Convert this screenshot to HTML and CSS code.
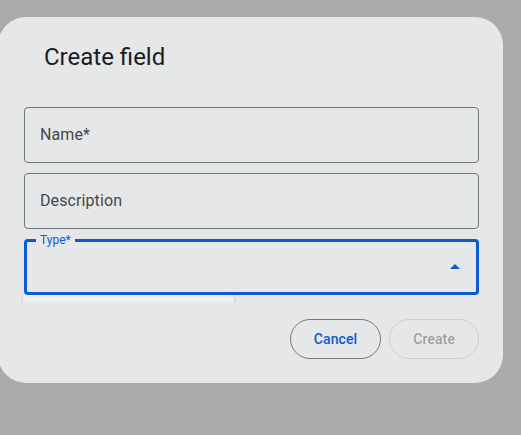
FILE: index.html
```html
<!DOCTYPE html>
<html>
<head>
<meta charset="utf-8">
<link rel="stylesheet" href="styles.css">
</head>
<body>
<div class="dialog">
  <h1 class="title">Create field</h1>
  <div class="fields">
    <div class="field"><span class="placeholder">Name*</span></div>
    <div class="field"><span class="placeholder">Description</span></div>
    <div class="field field-focused">
      <span class="floating-label">Type*</span>
      <span class="arrow"></span>
      <div class="menu-clip"><div class="menu"></div></div>
    </div>
  </div>
  <div class="actions">
    <button class="btn btn-cancel">Cancel</button>
    <button class="btn btn-disabled">Create</button>
  </div>
</div>
</body>
</html>
```

FILE: styles.css
```css
html, body {
  margin: 0;
  padding: 0;
  background: #aaabaa;
  font-family: Roboto, "Liberation Sans", sans-serif;
  overflow: hidden;
}
body {
  height: 435px;
  padding-top: 17px;
  box-sizing: border-box;
}
.dialog {
  margin-left: -2px;
  width: 505px;
  box-sizing: border-box;
  background: #e6e7e9;
  border-radius: 28px;
  padding: 24px 24px 24px 26px;
}
.title {
  margin: 0 0 34px 20px;
  font-size: 24px;
  line-height: 32px;
  font-weight: 400;
  color: #1b1c1e;
}
.fields {
  display: flex;
  flex-direction: column;
  gap: 10px;
}
.field {
  position: relative;
  height: 56px;
  box-sizing: border-box;
  border: 1px solid #72787a;
  border-radius: 4px;
  display: flex;
  align-items: center;
  padding: 0 16px 0 15px;
}
.placeholder {
  font-size: 16px;
  line-height: 24px;
  color: #43474a;
  letter-spacing: 0.1px;
}
.field-focused {
  border: 3px solid #0a5ad2;
  justify-content: flex-end;
  padding-right: 16px;
}
.floating-label {
  position: absolute;
  left: 9px;
  top: -10px;
  padding: 0 4px;
  background: #e6e7e9;
  font-size: 12px;
  line-height: 16px;
  color: #0a5ad2;
}
.arrow {
  width: 0;
  height: 0;
  border-left: 5px solid transparent;
  border-right: 5px solid transparent;
  border-bottom: 5px solid #0a5ad2;
  margin-top: -1px;
}
.menu-clip {
  position: absolute;
  left: -7px;
  top: calc(100% + 3px);
  width: 222px;
  height: 8px;
  overflow: hidden;
  padding: 0 4px 0 3px;
  box-sizing: border-box;
}
.menu {
  width: 211px;
  height: 40px;
  background: #eceef0;
  border-radius: 4px;
  box-shadow: 0 1px 3px rgba(0, 0, 0, 0.25);
}
.actions {
  display: flex;
  justify-content: flex-end;
  gap: 8px;
  margin-top: 24px;
}
.btn {
  height: 40px;
  padding: 0 23px;
  border-radius: 20px;
  background: transparent;
  font-family: Roboto, "Liberation Sans", sans-serif;
  font-size: 14px;
  font-weight: 500;
  letter-spacing: 0.1px;
}
.btn-cancel {
  border: 1px solid #747877;
  color: #0a5ad2;
}
.btn-disabled {
  border: 1px solid rgba(31, 31, 31, 0.12);
  color: rgba(31, 31, 31, 0.38);
}
```
